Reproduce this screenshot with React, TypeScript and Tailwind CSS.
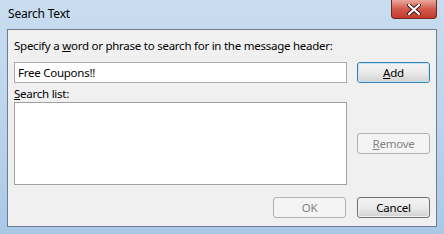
import type { ReactNode } from "react";

const FONT = { fontFamily: '"Noto Sans", "Open Sans", Arial, sans-serif' };

function WinButton({
  children,
  variant = "normal",
  className = "",
}: {
  children: ReactNode;
  variant?: "normal" | "default" | "disabled";
  className?: string;
}) {
  if (variant === "disabled") {
    return (
      <div
        className={`flex h-[21px] w-[73px] items-center justify-center rounded-[3px] border border-[#adb2b5] bg-[#f4f4f4] text-[11.5px] tracking-[-0.25px] text-[#838383] ${className}`}
      >
        {children}
      </div>
    );
  }
  const border = variant === "default" ? "border-[#3c7fb1]" : "border-[#707070]";
  return (
    <div
      className={`h-[21px] w-[73px] rounded-[3px] border ${border} p-px ${className}`}
    >
      <div
        className={`flex h-full w-full items-center justify-center rounded-[2px] bg-gradient-to-b from-[#f2f2f2] via-[#ebebeb] to-[#d4d4d4] text-[11.5px] tracking-[-0.25px] text-black ${
          variant === "default" ? "ring-1 ring-[#bfe3f7]" : ""
        }`}
      >
        {children}
      </div>
    </div>
  );
}

function CloseButton() {
  return (
    <div className="flex h-[19px] w-[46px] items-center justify-center rounded-b-[4px] border border-t-0 border-[#6b2a22] bg-gradient-to-b from-[#e8a89c] via-[#d2594b] to-[#c43a2c]">
      <svg width="14" height="11" viewBox="0 0 14 11">
        <path
          d="M2 1 L12 10 M12 1 L2 10"
          stroke="#3b1510"
          strokeWidth="4"
          strokeLinecap="round"
        />
        <path
          d="M2 1 L12 10 M12 1 L2 10"
          stroke="#ffffff"
          strokeWidth="2.2"
          strokeLinecap="round"
        />
      </svg>
    </div>
  );
}

export default function App() {
  return (
    <div
      style={FONT}
      className="flex h-[234px] w-[444px] flex-col overflow-hidden bg-gradient-to-b from-[#c9ddf0] via-[#bcd4ec] to-[#a9c8e6]"
    >
      <div className="flex h-[29px] items-start justify-between">
        <span className="pl-[8px] pt-[6px] text-[12px] leading-[15px] tracking-[-0.2px] text-black">
          Search Text
        </span>
        <div className="mr-[7px]">
          <CloseButton />
        </div>
      </div>

      <div className="mx-[7px] mb-[7px] flex flex-1 flex-col border border-[#6d7d8e] bg-[#f0f0f0] pl-[6px] pr-[6px] pt-[8px] text-[11.5px] tracking-[-0.25px] text-black">
        <div className="h-[15px] leading-[15px]">
          Specify a <u>w</u>ord or phrase to search for in the message header:
        </div>

        <div className="mt-[9px] flex gap-[10px]">
          <div className="flex h-[21px] flex-1 items-center border border-[#abadb3] bg-white pl-[3px]">
            Free Coupons!!
          </div>
          <WinButton variant="default">
            <u>A</u>dd
          </WinButton>
        </div>

        <div className="mt-[3px] h-[15px] leading-[15px]">
          <u>S</u>earch list:
        </div>

        <div className="mt-[1px] flex gap-[10px]">
          <div className="h-[83px] flex-1 border border-[#a0a0a0] bg-white" />
          <div className="w-[73px] pt-[31px]">
            <WinButton variant="disabled">
              <u>R</u>emove
            </WinButton>
          </div>
        </div>

        <div className="mt-[12px] flex justify-end gap-[11px]">
          <WinButton variant="disabled">OK</WinButton>
          <WinButton>Cancel</WinButton>
        </div>
      </div>
    </div>
  );
}
